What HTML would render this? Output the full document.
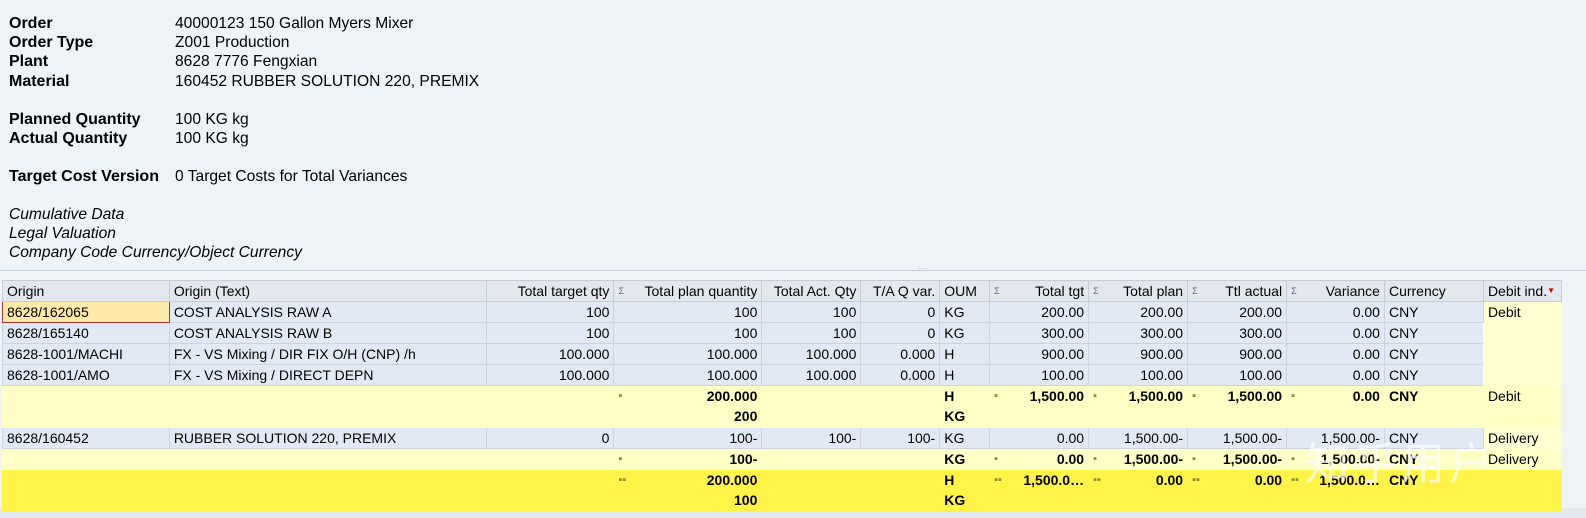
<!DOCTYPE html>
<html><head><meta charset="utf-8"><style>
body{margin:0;width:1586px;height:518px;background:#eef3f8;font-family:"Liberation Sans",Tahoma,sans-serif;overflow:hidden;position:relative}
.t{position:absolute;font-size:15.6px;line-height:19.2px;color:#000}
.b{font-weight:bold;font-size:16px}
.i{font-style:italic}
table{position:absolute;left:2px;top:280px;border-collapse:collapse;table-layout:fixed;font-size:14px;width:1560px}
td{height:20px;padding:0 4px;border:1px solid #c9d4e0;white-space:nowrap;overflow:hidden;line-height:20px}
.h td{background:#e3e8ee;border-color:#c4ccd6}
.r td{background:#e1eaf4}
.y td{background:#ffffc6;border-color:#ffffc6;font-weight:bold;vertical-align:top}
.g td{background:#fff447;border-color:#fff447;font-weight:bold;vertical-align:top}
.n{text-align:right}
.s{font-size:9px;color:#667;vertical-align:middle}
.d{background:#ffffd2 !important;border-color:#ffffd2 !important;vertical-align:top}
.q{color:#8a8a30;font-size:11px}
</style></head><body>
<div class="t b" style="left:9px;top:14px">Order<br>Order Type<br>Plant<br>Material</div>
<div class="t" style="left:175px;top:14px">40000123 150 Gallon Myers Mixer<br>Z001 Production<br>8628 7776 Fengxian<br>160452 RUBBER SOLUTION 220, PREMIX</div>
<div class="t b" style="left:9px;top:110px">Planned Quantity<br>Actual Quantity</div>
<div class="t" style="left:175px;top:110px">100 KG kg<br>100 KG kg</div>
<div class="t b" style="left:9px;top:167px">Target Cost Version</div>
<div class="t" style="left:175px;top:167px">0 Target Costs for Total Variances</div>
<div class="t i" style="left:9px;top:205px">Cumulative Data<br>Legal Valuation<br>Company Code Currency/Object Currency</div>
<div style="position:absolute;left:0;top:270px;width:1586px;height:1px;background:#c5ced8"></div>
<div style="position:absolute;left:0;top:508px;width:1586px;height:10px;background:#e4e9ef"></div>
<table>
<colgroup><col style="width:10.7%"><col style="width:20.32%"><col style="width:8.2%"><col style="width:9.49%"><col style="width:6.35%"><col style="width:5.06%"><col style="width:3.2%"><col style="width:6.35%"><col style="width:6.35%"><col style="width:6.35%"><col style="width:6.28%"><col style="width:6.35%"><col style="width:5%"></colgroup>
<tr class="h"><td>Origin</td><td>Origin (Text)</td><td class="n">Total target qty</td><td class="n"><span class="s" style="float:left">Σ</span>Total plan quantity</td><td class="n">Total Act. Qty</td><td class="n">T/A Q var.</td><td>OUM</td><td class="n"><span class="s" style="float:left">Σ</span>Total tgt</td><td class="n"><span class="s" style="float:left">Σ</span>Total plan</td><td class="n"><span class="s" style="float:left">Σ</span>Ttl actual</td><td class="n"><span class="s" style="float:left">Σ</span>Variance</td><td>Currency</td><td>Debit ind.<span style="color:#c00;font-size:8px;vertical-align:top">▼</span></td></tr>
<tr class="r"><td style="background:#ffe9a8;border:1px solid #a33">8628/162065</td><td>COST ANALYSIS RAW A</td><td class="n">100</td><td class="n">100</td><td class="n">100</td><td class="n">0</td><td>KG</td><td class="n">200.00</td><td class="n">200.00</td><td class="n">200.00</td><td class="n">0.00</td><td>CNY</td><td class="d" rowspan="4">Debit</td></tr>
<tr class="r"><td>8628/165140</td><td>COST ANALYSIS RAW B</td><td class="n">100</td><td class="n">100</td><td class="n">100</td><td class="n">0</td><td>KG</td><td class="n">300.00</td><td class="n">300.00</td><td class="n">300.00</td><td class="n">0.00</td><td>CNY</td></tr>
<tr class="r"><td>8628-1001/MACHI</td><td>FX - VS Mixing / DIR FIX O/H (CNP) /h</td><td class="n">100.000</td><td class="n">100.000</td><td class="n">100.000</td><td class="n">0.000</td><td>H</td><td class="n">900.00</td><td class="n">900.00</td><td class="n">900.00</td><td class="n">0.00</td><td>CNY</td></tr>
<tr class="r"><td>8628-1001/AMO</td><td>FX - VS Mixing / DIRECT DEPN</td><td class="n">100.000</td><td class="n">100.000</td><td class="n">100.000</td><td class="n">0.000</td><td>H</td><td class="n">100.00</td><td class="n">100.00</td><td class="n">100.00</td><td class="n">0.00</td><td>CNY</td></tr>
<tr class="y"><td style="height:41px"></td><td></td><td></td><td class="n"><span class="q" style="float:left">▪</span>200.000<br>200</td><td></td><td></td><td>H<br>KG</td><td class="n"><span class="q" style="float:left">▪</span>1,500.00</td><td class="n"><span class="q" style="float:left">▪</span>1,500.00</td><td class="n"><span class="q" style="float:left">▪</span>1,500.00</td><td class="n"><span class="q" style="float:left">▪</span>0.00</td><td>CNY</td><td style="font-weight:normal">Debit</td></tr>
<tr class="r"><td>8628/160452</td><td>RUBBER SOLUTION 220, PREMIX</td><td class="n">0</td><td class="n">100-</td><td class="n">100-</td><td class="n">100-</td><td>KG</td><td class="n">0.00</td><td class="n">1,500.00-</td><td class="n">1,500.00-</td><td class="n">1,500.00-</td><td>CNY</td><td class="d">Delivery</td></tr>
<tr class="y"><td></td><td></td><td></td><td class="n"><span class="q" style="float:left">▪</span>100-</td><td></td><td></td><td>KG</td><td class="n"><span class="q" style="float:left">▪</span>0.00</td><td class="n"><span class="q" style="float:left">▪</span>1,500.00-</td><td class="n"><span class="q" style="float:left">▪</span>1,500.00-</td><td class="n"><span class="q" style="float:left">▪</span>1,500.00-</td><td>CNY</td><td style="font-weight:normal">Delivery</td></tr>
<tr class="g"><td style="height:41px"></td><td></td><td></td><td class="n"><span class="q" style="float:left">▪▪</span>200.000<br>100</td><td></td><td></td><td>H<br>KG</td><td class="n"><span class="q" style="float:left">▪▪</span>1,500.0…</td><td class="n"><span class="q" style="float:left">▪▪</span>0.00</td><td class="n"><span class="q" style="float:left">▪▪</span>0.00</td><td class="n"><span class="q" style="float:left">▪▪</span>1,500.0…</td><td>CNY</td><td></td></tr>
</table>
<div style="position:absolute;left:1305px;top:428px;font-family:'Noto Sans CJK SC',sans-serif;font-size:44px;color:rgba(255,255,255,0.7);letter-spacing:4px">知乎用户</div>
<div style="position:absolute;left:918px;top:266px;font-size:6px;color:#889">·····</div>
</body></html>
